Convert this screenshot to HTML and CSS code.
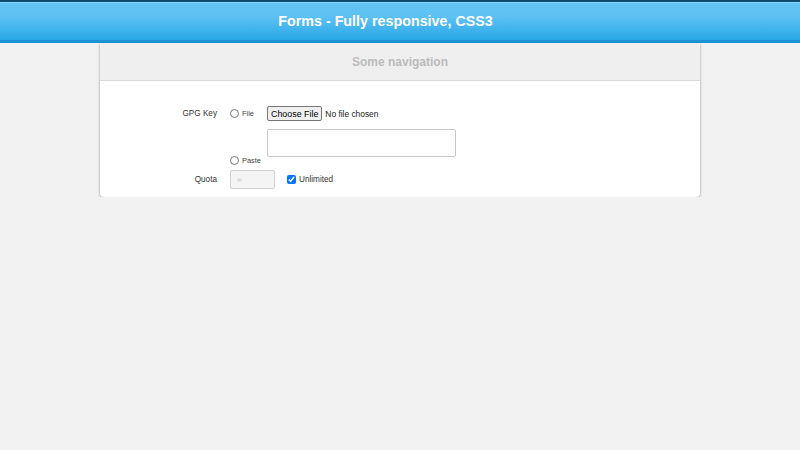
FILE: index.html
```html
<!DOCTYPE html>
<html lang="en">
<head>
<meta charset="utf-8">
<title>Forms - Fully responsive, CSS3</title>
<link rel="stylesheet" href="styles.css">
</head>
<body>
<header class="topbar">
  <h1 class="title">Forms - Fully responsive, CSS3</h1>
</header>
<main class="card">
  <nav class="nav">Some navigation</nav>
  <form class="form">
    <div class="row">
      <label class="lbl lbl-top">GPG Key</label>
      <div class="key-grid">
        <label class="opt opt-file"><input type="radio" name="key" class="radio"> <span>File</span></label>
        <input type="file" class="file">
        <label class="opt opt-paste"><input type="radio" name="key" class="radio"> <span>Paste</span></label>
        <textarea class="area"></textarea>
      </div>
    </div>
    <div class="row row-quota">
      <label class="lbl">Quota</label>
      <input type="text" class="quota" placeholder="∞" disabled>
      <label class="check"><input type="checkbox" class="cb" checked> <span>Unlimited</span></label>
    </div>
  </form>
</main>
</body>
</html>
```
FILE: styles.css
```css
html, body {
  margin: 0;
  padding: 0;
}
body {
  background: #f2f2f2;
  font-family: "Liberation Sans", Arial, sans-serif;
  color: #333;
}
.topbar {
  height: 38px;
  border-top: 2px solid #0c4d70;
  border-bottom: 3px solid #1b93d4;
  background: linear-gradient(#64c5f4, #5cc0f2 40%, #27a8e7);
  display: flex;
  align-items: center;
  justify-content: center;
  box-shadow: inset 0 1px 0 #8ad4f7;
}
.title {
  margin: 0;
  padding-right: 29px;
  color: #fff;
  font-size: 14.3px;
  font-weight: bold;
  line-height: 1;
}
.card {
  width: 600px;
  margin: 0 auto;
  background: #fff;
  border-radius: 0 0 4px 4px;
  box-shadow: 0 1px 3px rgba(0,0,0,0.35);
  overflow: hidden;
}
.nav {
  height: 37px;
  background: #efefef;
  border-bottom: 1px solid #d9d9d9;
  display: flex;
  align-items: center;
  justify-content: center;
  color: #bbb;
  font-weight: bold;
  font-size: 12px;
}
.form {
  padding: 25px 0 8px 0;
}
.row {
  display: flex;
  align-items: flex-start;
}
.lbl {
  width: 117px;
  text-align: right;
  font-size: 8.2px;
  color: #333;
  margin-right: 13px;
  flex: none;
}
.lbl-top {
  margin-top: 3px;
}
.key-grid {
  display: grid;
  grid-template-columns: 37px auto;
  row-gap: 8px;
}
.opt {
  display: flex;
  align-items: center;
  font-size: 7.4px;
  color: #444;
}
.opt-file {
  align-self: center;
}
.opt-paste {
  align-self: end;
  margin-bottom: -8px;
}
.radio {
  width: 9px;
  height: 9px;
  margin: 0 3px 0 0;
}
.file {
  font-family: "Liberation Sans", Arial, sans-serif;
  font-size: 8.4px;
  color: #222;
  height: 15px;
}
.file::file-selector-button {
  font-family: "Liberation Sans", Arial, sans-serif;
  font-size: 8.9px;
  padding: 1px 3px;
  margin: 0 3px 0 0;
  height: 15px;
  border: 1px solid #767676;
  border-radius: 2px;
  background: #efefef;
  color: #000;
}
.area {
  width: 189px;
  height: 28px;
  box-sizing: border-box;
  margin: 0;
  border: 1px solid #c8c8c8;
  border-radius: 2px;
  resize: none;
  display: block;
}
.row-quota {
  margin-top: 13px;
  align-items: center;
}
.quota {
  width: 45px;
  height: 19px;
  box-sizing: border-box;
  margin: 0 12px 0 0;
  border: 1px solid #d0d0d0;
  border-radius: 2px;
  background: #f4f4f4;
  padding: 0 6px;
  font-size: 7px;
  font-family: "Liberation Sans", Arial, sans-serif;
}
.quota::placeholder {
  color: #bbb;
}
.check {
  display: flex;
  align-items: center;
  font-size: 8.2px;
  color: #333;
}
.cb {
  width: 9px;
  height: 9px;
  margin: 0 3px 0 0;
}
```
